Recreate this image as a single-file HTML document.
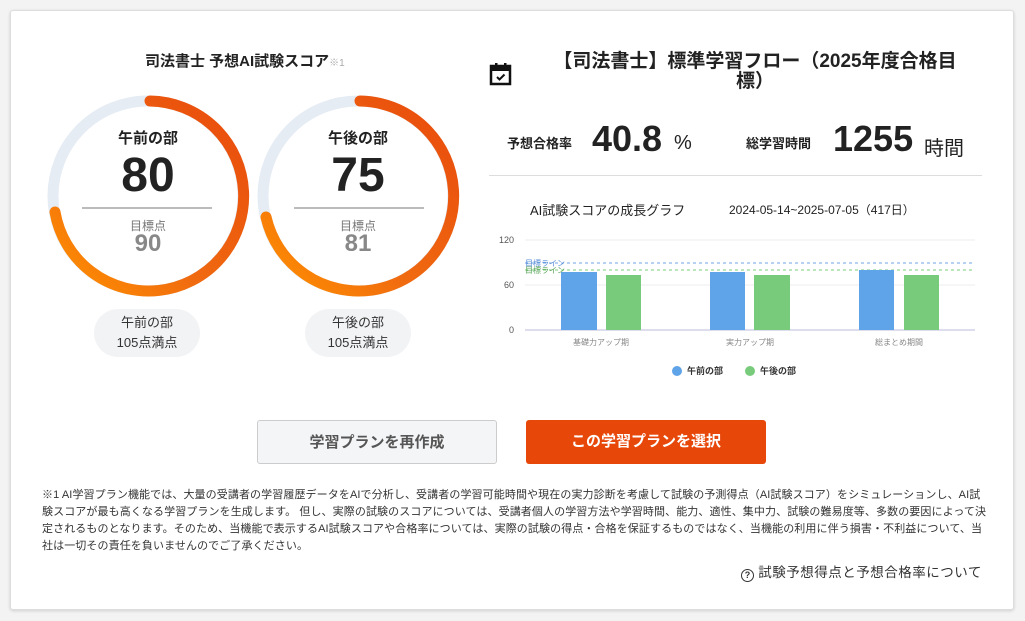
<!DOCTYPE html>
<html><head><meta charset="utf-8"><style>
*{margin:0;padding:0;box-sizing:border-box}
body{width:1025px;height:621px;background:#f3f3f3;font-family:"Liberation Sans","Noto Sans CJK JP",sans-serif;color:#222;position:relative;overflow:hidden}
.card{position:absolute;left:10px;top:10px;width:1004px;height:600px;background:#fff;border:1px solid #ddd;border-radius:3px;box-shadow:0 1px 3px rgba(0,0,0,.15)}
.a{position:absolute;white-space:nowrap}
.pill{position:absolute;width:106px;height:48px;border-radius:24px;background:#f2f3f5;text-align:center;font-size:13px;line-height:20px;padding-top:4px;color:#333}
.btn{position:absolute;top:420px;width:240px;height:44px;border-radius:3px;font-size:15px;font-weight:bold;text-align:center;line-height:44px}
</style></head><body>
<div class="card"></div>
<div class="a" style="left:145px;top:50px;font-size:15px;font-weight:bold">司法書士 予想AI試験スコア<span style="font-size:10px;color:#aaa;font-weight:normal">※1</span></div>
<svg class="a" style="left:0;top:0" width="480" height="310">
<defs><linearGradient id="g" x1="1" y1="0" x2="0" y2="1"><stop offset="0" stop-color="#e84a0c"/><stop offset="0.6" stop-color="#f06a10"/><stop offset="1" stop-color="#ff9200"/></linearGradient></defs>
<circle cx="148" cy="196" r="95" fill="none" stroke="#e5ecf4" stroke-width="11"/>
<circle cx="358" cy="196" r="95" fill="none" stroke="#e5ecf4" stroke-width="11"/>
<path d="M150 101 A95 95 0 1 1 55 212" fill="none" stroke="url(#g)" stroke-width="11" stroke-linecap="round"/>
<path d="M360 101 A95 95 0 1 1 266 217" fill="none" stroke="url(#g)" stroke-width="11" stroke-linecap="round"/>
<line x1="82" y1="208" x2="212" y2="208" stroke="#777"/>
<line x1="294" y1="208" x2="424" y2="208" stroke="#777"/>
</svg>
<div class="a" style="left:98px;width:100px;text-align:center;top:127px;font-size:15px;font-weight:bold">午前の部</div>
<div class="a" style="left:78px;width:140px;text-align:center;top:148px;font-size:48px;font-weight:bold;line-height:56px">80</div>
<div class="a" style="left:98px;width:100px;text-align:center;top:217px;font-size:12px;color:#777">目標点</div>
<div class="a" style="left:98px;width:100px;text-align:center;top:230px;font-size:24px;font-weight:bold;color:#888">90</div>
<div class="a" style="left:308px;width:100px;text-align:center;top:127px;font-size:15px;font-weight:bold">午後の部</div>
<div class="a" style="left:288px;width:140px;text-align:center;top:148px;font-size:48px;font-weight:bold;line-height:56px">75</div>
<div class="a" style="left:308px;width:100px;text-align:center;top:217px;font-size:12px;color:#777">目標点</div>
<div class="a" style="left:308px;width:100px;text-align:center;top:230px;font-size:24px;font-weight:bold;color:#888">81</div>
<div class="pill" style="left:94px;top:309px">午前の部<br>105点満点</div>
<div class="pill" style="left:305px;top:309px">午後の部<br>105点満点</div>

<svg class="a" style="left:489px;top:62px" width="24" height="24" viewBox="0 0 24 24"><rect x="2" y="4" width="19" height="18" fill="none" stroke="#111" stroke-width="2.5"/><rect x="2" y="4" width="19" height="5" fill="#111"/><rect x="6" y="1" width="2.5" height="5" fill="#111"/><rect x="15" y="1" width="2.5" height="5" fill="#111"/><path d="M8 15l2.5 2.5 5-5" fill="none" stroke="#111" stroke-width="2"/></svg>
<div class="a" style="left:520px;width:470px;text-align:center;top:52px;font-size:19px;font-weight:bold;line-height:20px;white-space:normal">【司法書士】標準学習フロー（2025年度合格目<br>標）</div>
<div class="a" style="left:507px;top:133px;font-size:13px;font-weight:bold">予想合格率</div>
<div class="a" style="left:592px;top:118px;font-size:36px;font-weight:bold">40.8</div>
<div class="a" style="left:674px;top:132px;font-size:20px">%</div>
<div class="a" style="left:746px;top:133px;font-size:13px;font-weight:bold">総学習時間</div>
<div class="a" style="left:833px;top:118px;font-size:36px;font-weight:bold">1255</div>
<div class="a" style="left:924px;top:132px;font-size:20px">時間</div>
<div class="a" style="left:489px;top:175px;width:493px;height:1px;background:#ddd"></div>
<div class="a" style="left:530px;top:200px;font-size:13px">AI試験スコアの成長グラフ</div>
<div class="a" style="left:729px;top:201px;font-size:12px">2024-05-14~2025-07-05（417日）</div>
<svg class="a" style="left:480px;top:230px" width="510" height="160" font-family="Liberation Sans, Noto Sans CJK JP, sans-serif">
<g fill="#555" font-size="9" text-anchor="end"><text x="34" y="13">120</text><text x="34" y="58">60</text><text x="34" y="103">0</text></g>
<line x1="45" y1="10" x2="495" y2="10" stroke="#eee"/>
<line x1="45" y1="55" x2="495" y2="55" stroke="#eee"/>
<line x1="45" y1="100" x2="495" y2="100" stroke="#dde" stroke-width="2"/>
<line x1="45" y1="33" x2="495" y2="33" stroke="#6fa3e6" stroke-dasharray="3,3"/>
<line x1="45" y1="40" x2="495" y2="40" stroke="#7acc7a" stroke-dasharray="3,3"/>
<text x="45" y="36" font-size="8" fill="#5a8fd8">目標ライン</text>
<text x="45" y="43" font-size="8" fill="#5aa55a">目標ライン</text>
<g fill="#5fa3e8"><rect x="81" y="42" width="36" height="58"/><rect x="230" y="42" width="35" height="58"/><rect x="379" y="40" width="35" height="60"/></g>
<g fill="#79cb7c"><rect x="126" y="45" width="35" height="55"/><rect x="274" y="45" width="36" height="55"/><rect x="424" y="45" width="35" height="55"/></g>
<g fill="#888" font-size="8" text-anchor="middle"><text x="121" y="115">基礎力アップ期</text><text x="270" y="115">実力アップ期</text><text x="419" y="115">総まとめ期間</text></g>
<circle cx="197" cy="141" r="5" fill="#5fa3e8"/><text x="207" y="144" font-size="9" font-weight="bold" fill="#333">午前の部</text>
<circle cx="270" cy="141" r="5" fill="#79cb7c"/><text x="280" y="144" font-size="9" font-weight="bold" fill="#333">午後の部</text>
</svg>
<div class="btn" style="left:257px;background:#f4f5f7;border:1px solid #ccc;color:#555">学習プランを再作成</div>
<div class="btn" style="left:526px;background:#e8470a;color:#fff">この学習プランを選択</div>
<div class="a" style="left:42px;top:487px;width:945px;white-space:normal;font-size:11px;line-height:17px;color:#333;letter-spacing:0.1px">※1 AI学習プラン機能では、大量の受講者の学習履歴データをAIで分析し、受講者の学習可能時間や現在の実力診断を考慮して試験の予測得点（AI試験スコア）をシミュレーションし、AI試験スコアが最も高くなる学習プランを生成します。 但し、実際の試験のスコアについては、受講者個人の学習方法や学習時間、能力、適性、集中力、試験の難易度等、多数の要因によって決定されるものとなります。そのため、当機能で表示するAI試験スコアや合格率については、実際の試験の得点・合格を保証するものではなく、当機能の利用に伴う損害・不利益について、当社は一切その責任を負いませんのでご了承ください。</div>
<div class="a" style="left:741px;top:561px;font-size:13.5px;letter-spacing:0.5px;color:#333"><span style="display:inline-block;width:13px;height:13px;border:1.5px solid #333;border-radius:50%;font-size:9px;line-height:10px;text-align:center;font-weight:bold;vertical-align:-1px;letter-spacing:0">?</span> 試験予想得点と予想合格率について</div>
</body></html>
